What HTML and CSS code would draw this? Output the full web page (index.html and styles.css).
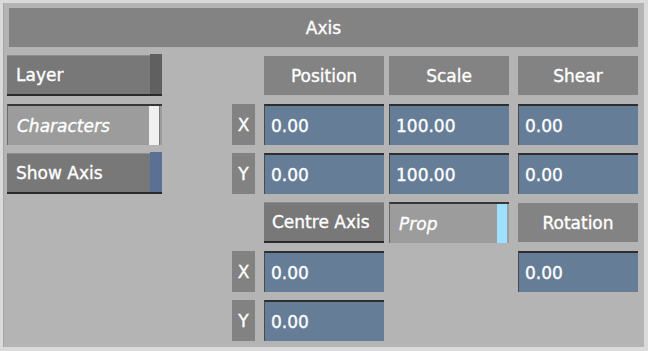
FILE: index.html
```html
<!DOCTYPE html>
<html>
<head>
<meta charset="utf-8">
<link rel="stylesheet" href="styles.css">
</head>
<body>
<div class="panel">
  <div class="title">Axis</div>
  <div class="grid">
    <div class="btn c-left r1"><span class="lbl">Layer</span><span class="cap"></span></div>
    <div class="toggle c-left r2"><span class="lbl it">Characters</span><span class="cap white"></span></div>
    <div class="btn c-left r3"><span class="lbl">Show Axis</span><span class="cap blue"></span></div>

    <div class="head c1 r1">Position</div>
    <div class="head c2 r1">Scale</div>
    <div class="head c3 r1">Shear</div>

    <div class="axis c-ax r2">X</div>
    <div class="field c1 r2">0.00</div>
    <div class="field c2 r2">100.00</div>
    <div class="field c3 r2">0.00</div>

    <div class="axis c-ax r3">Y</div>
    <div class="field c1 r3">0.00</div>
    <div class="field c2 r3">100.00</div>
    <div class="field c3 r3">0.00</div>

    <div class="btn center c1 r4"><span class="lbl">Centre Axis</span></div>
    <div class="toggle c2 r4"><span class="lbl it">Prop</span><span class="cap cyan"></span></div>
    <div class="head c3 r4">Rotation</div>

    <div class="axis c-ax r5">X</div>
    <div class="field c1 r5">0.00</div>
    <div class="field c3 r5">0.00</div>

    <div class="axis c-ax r6">Y</div>
    <div class="field c1 r6">0.00</div>
  </div>
</div>
</body>
</html>
```
FILE: styles.css
```css
html, body {
  margin: 0;
  padding: 0;
  background: #dadada;
}
body {
  padding: 3px;
  width: 648px;
  height: 351px;
  box-sizing: border-box;
  font-family: "DejaVu Sans", sans-serif;
  font-size: 17px;
  color: #ffffff;
  -webkit-text-stroke: 0.35px #ffffff;
}
.panel {
  width: 641px;
  height: 344px;
  box-sizing: border-box;
  background: #b4b4b4;
  border-left: 1px solid #a4a4a4;
  padding: 5px 6px 0 3px;
}
.title {
  height: 39px;
  margin-left: 2px;
  background: #838383;
  display: flex;
  align-items: center;
  justify-content: center;
}
.grid {
  display: grid;
  grid-template-columns: 155px 70px 23px 9px 120px 5px 120px 9px 120px;
  grid-template-rows: repeat(6, 41px);
  row-gap: 8px;
  margin-top: 8px;
}
.c-left { grid-column: 1; }
.c-ax { grid-column: 3; }
.c1 { grid-column: 5; }
.c2 { grid-column: 7; }
.c3 { grid-column: 9; }
.r1 { grid-row: 1; }
.r2 { grid-row: 2; }
.r3 { grid-row: 3; }
.r4 { grid-row: 4; }
.r5 { grid-row: 5; }
.r6 { grid-row: 6; }

.lbl {
  flex: 1;
  padding-left: 9px;
  white-space: nowrap;
}
.it { font-style: italic; }

.btn {
  display: flex;
  align-items: center;
  background: #787878;
  border-top: 1px solid #8c8c8c;
  border-bottom: 2px solid #2b2b2b;
  box-sizing: border-box;
}
.btn .cap {
  align-self: stretch;
  width: 12px;
  background: #606060;
  margin-top: -2px;
}
.btn .cap.blue { background: #5a7195; }
.btn.center .lbl { padding-left: 8px; }

.toggle {
  display: flex;
  align-items: center;
  background: #9c9c9c;
  border-top: 2px solid #363636;
  border-left: 1px solid #6a6a6a;
  box-sizing: border-box;
  padding-right: 2px;
}
.toggle .cap {
  align-self: stretch;
  width: 10px;
}
.toggle .cap.white { background: #f0f0f0; border-right: 1px solid #7a7a7a; }
.toggle .cap.cyan { background: #9ce2ff; }

.head {
  background: #838383;
  display: flex;
  align-items: center;
  justify-content: center;
  height: 39px;
  margin-top: 1px;
}
.axis {
  background: #828282;
  display: flex;
  align-items: center;
  justify-content: center;
}
.field {
  background: #667d97;
  border-top: 2px solid #2e2e2e;
  border-left: 1px solid #4a4a4a;
  box-sizing: border-box;
  display: flex;
  align-items: center;
  padding-left: 6px;
}
```
